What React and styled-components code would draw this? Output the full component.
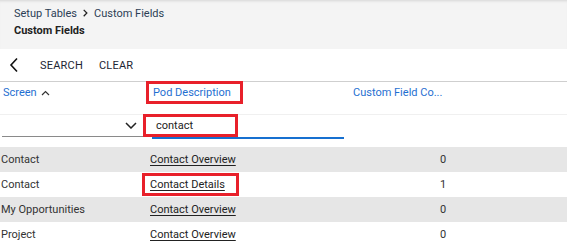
import React from "react";
import styled, { createGlobalStyle } from "styled-components";

const GlobalStyle = createGlobalStyle`
    body {
        margin: 0;
        background: #fff;
        font-family: Roboto, "Liberation Sans", sans-serif;
        color: #333;
    }
`;

const Page = styled.div`
    width: 567px;
    height: 242px;
    overflow: hidden;
`;

const PageHeader = styled.div`
    height: 49px;
    box-sizing: border-box;
    padding: 5px 14px 0;
    background: #f4f4f4;
    box-shadow: inset 0 3px 3px -2px rgba(0, 0, 0, 0.12);
`;

const Breadcrumb = styled.div`
    display: flex;
    align-items: center;
    gap: 4px;
    height: 16px;
    font-size: 11px;
    color: #2c3e55;
`;

const PageTitle = styled.div`
    margin-top: 3px;
    font-size: 11px;
    font-weight: 700;
    color: #222;
`;

const Toolbar = styled.div`
    display: flex;
    align-items: center;
    height: 32px;
    border-bottom: 1px solid #cfcfcf;
    padding-left: 9px;
`;

const BackButton = styled.button`
    display: flex;
    align-items: center;
    background: none;
    border: none;
    padding: 0;
    margin-right: 21px;
    cursor: pointer;
`;

const ToolButton = styled.button`
    background: none;
    border: none;
    padding: 0;
    margin-right: 16px;
    font-family: inherit;
    font-size: 11px;
    font-weight: 400;
    color: #1d2533;
    letter-spacing: 0.2px;
    cursor: pointer;
`;

const Row = styled.div`
    display: grid;
    grid-template-columns: 147px 198px 196px 1fr;
    align-items: ${(p) => (p.$head ? "start" : "center")};
    height: ${(p) => p.$h || 25}px;
    box-sizing: border-box;
    background: ${(p) => (p.$alt ? "#e6e6e6" : "#fff")};
    border-bottom: ${(p) => (p.$line ? "1px solid #f0f0f0" : "none")};
    font-size: 11px;
`;

const Cell = styled.div`
    padding-left: ${(p) => p.$pl ?? 3}px;
    text-align: ${(p) => (p.$center ? "center" : "left")};
    white-space: nowrap;
    position: relative;
`;

const HeadLink = styled.span`
    display: inline-flex;
    align-items: center;
    gap: 4px;
    height: 21px;
    color: #1f6fd1;
    font-size: 11px;
`;

const Highlight = styled.span`
    display: inline-flex;
    align-items: center;
    box-sizing: border-box;
    height: 23px;
    margin-left: ${(p) => p.$ml}px;
    margin-top: ${(p) => p.$mt || 0}px;
    padding: 0 ${(p) => p.$pr}px 0 ${(p) => p.$pl}px;
    border: 3px solid #e8202a;
`;

const SelectBox = styled.div`
    display: flex;
    justify-content: flex-end;
    align-items: center;
    height: 22px;
    margin-left: 2px;
    width: 141px;
    border-bottom: 1px solid #8a8a8a;
    padding-right: 6px;
    box-sizing: border-box;
`;

const InputLine = styled.div`
    margin-left: 5px;
    width: 192px;
    height: 22px;
    border-bottom: 2px solid #1670d0;
`;

const InputBox = styled.div`
    position: absolute;
    left: -4px;
    top: -1px;
    width: 95px;
    height: 23px;
    box-sizing: border-box;
    border: 3px solid #e8202a;
    padding-left: 10px;
    display: flex;
    align-items: center;
    font-size: 11px;
    color: #222;
`;

const Link = styled.span`
    color: #222;
    text-decoration: underline;
    text-underline-offset: 2px;
`;

const rows = [
    { screen: "Contact", pod: "Contact Overview", count: 0 },
    { screen: "Contact", pod: "Contact Details", count: 1, marked: true },
    { screen: "My Opportunities", pod: "Contact Overview", count: 0 },
    { screen: "Project", pod: "Contact Overview", count: 0 },
];

const App = () => {
    return (
        <Page>
            <GlobalStyle />
            <PageHeader>
                <Breadcrumb>
                    <span>Setup Tables</span>
                    <svg width="9" height="9" viewBox="0 0 10 10">
                        <path d="M3 1 L6.5 4.5 L3 8" fill="none" stroke="#222" strokeWidth="1.4" />
                    </svg>
                    <span>Custom Fields</span>
                </Breadcrumb>
                <PageTitle>Custom Fields</PageTitle>
            </PageHeader>
            <Toolbar>
                <BackButton aria-label="Back">
                    <svg width="10" height="16" viewBox="0 0 10 16">
                        <path d="M8 1.5 L2 8 L8 14.5" fill="none" stroke="#111" strokeWidth="1.6" />
                    </svg>
                </BackButton>
                <ToolButton>SEARCH</ToolButton>
                <ToolButton>CLEAR</ToolButton>
            </Toolbar>
            <Row $h={33} $head $line>
                <Cell>
                    <HeadLink>
                        Screen
                        <svg width="9" height="6" viewBox="0 0 9 6">
                            <path d="M1 5 L4.5 1.5 L8 5" fill="none" stroke="#333" strokeWidth="1.2" />
                        </svg>
                    </HeadLink>
                </Cell>
                <Cell>
                    <Highlight $ml={-4} $mt={-1} $pl={4} $pr={9}>
                        <HeadLink>Pod Description</HeadLink>
                    </Highlight>
                </Cell>
                <Cell $pl={8}>
                    <HeadLink>Custom Field Co...</HeadLink>
                </Cell>
                <Cell />
            </Row>
            <Row $h={32} $head>
                <Cell $pl={0}>
                    <SelectBox>
                        <svg width="12" height="7" viewBox="0 0 12 7">
                            <path d="M1 1 L6 6 L11 1" fill="none" stroke="#222" strokeWidth="1.5" />
                        </svg>
                    </SelectBox>
                </Cell>
                <Cell $pl={0}>
                    <InputLine />
                    <InputBox>contact</InputBox>
                </Cell>
                <Cell />
                <Cell />
            </Row>
            {rows.map((r, i) => (
                <Row key={i} $alt={i % 2 === 0}>
                    <Cell $pl={1}>{r.screen}</Cell>
                    <Cell>
                        {r.marked ? (
                            <Highlight $ml={-8} $pl={5} $pr={11}>
                                <Link>{r.pod}</Link>
                            </Highlight>
                        ) : (
                            <Link>{r.pod}</Link>
                        )}
                    </Cell>
                    <Cell $pl={0} $center>
                        {r.count}
                    </Cell>
                    <Cell />
                </Row>
            ))}
        </Page>
    );
};

export default App;
